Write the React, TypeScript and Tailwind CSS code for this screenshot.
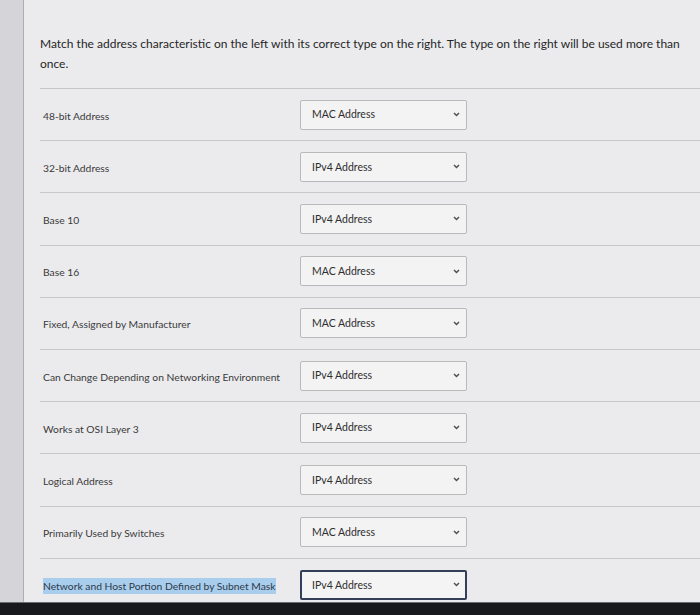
import React from 'react';

type Row = { label: string; value: string; highlight?: boolean };

const rows: Row[] = [
  { label: '48-bit Address', value: 'MAC Address' },
  { label: '32-bit Address', value: 'IPv4 Address' },
  { label: 'Base 10', value: 'IPv4 Address' },
  { label: 'Base 16', value: 'MAC Address' },
  { label: 'Fixed, Assigned by Manufacturer', value: 'MAC Address' },
  { label: 'Can Change Depending on Networking Environment', value: 'IPv4 Address' },
  { label: 'Works at OSI Layer 3', value: 'IPv4 Address' },
  { label: 'Logical Address', value: 'IPv4 Address' },
  { label: 'Primarily Used by Switches', value: 'MAC Address' },
  { label: 'Network and Host Portion Defined by Subnet Mask', value: 'IPv4 Address', highlight: true },
];

const Chevron: React.FC = () => (
  <svg width="7" height="5" viewBox="0 0 7 5" className="text-[#505050]">
    <path d="M1 1l2.5 2.5L6 1" fill="none" stroke="currentColor" strokeWidth="1.5" />
  </svg>
);

const App: React.FC = () => {
  return (
    <div className="w-[700px] h-[615px] flex flex-col bg-[#d6d6db] font-['Lato','Liberation_Sans',sans-serif] overflow-hidden">
      <div className="flex flex-1 min-h-0">
        {/* left window edge */}
        <div className="w-[24px] bg-[#d4d4d9] border-r border-[#aeaeb4]" />

        <div className="flex-1 flex flex-col bg-[#ebebee]">
          <div className="h-[4px] flex">
            <div className="w-[165px] bg-[#b4ba8a]" />
            <div className="flex-1 bg-[#d9d9dd]" />
          </div>

          <p className="w-[662px] pl-[16px] pt-[34px] text-[12px] leading-[20px] text-[#262626]">
            Match the address characteristic on the left with its correct type on the right. The type on the right will be used more than once.
          </p>

          <div className="mt-[14px] ml-[16px] flex flex-col border-t border-[#c5c5c8]">
            {rows.map((r, i) => (
              <div
                key={i}
                className="h-[52.2px] flex items-center border-b border-[#c8c8cb] last:border-b-0"
              >
                <div className="w-[260px] pl-[3px] pr-[8px] -mt-[2px]">
                  <span
                    className={
                      r.highlight
                        ? 'text-[10.3px] text-[#2d3a4a] bg-[#a9cdec] py-[2px]'
                        : 'text-[10.3px] text-[#3a3a3a]'
                    }
                  >
                    {r.label}
                  </span>
                </div>
                <div
                  className={
                    r.highlight
                      ? 'w-[167px] h-[30px] flex items-center justify-between pl-[10px] pr-[5px] bg-[#f4f4f5] border-2 border-[#34405a] rounded-[2px]'
                      : 'w-[167px] h-[30px] flex items-center justify-between pl-[11px] pr-[6px] bg-[#f3f3f4] border border-[#b9b9bc] rounded-[2px]'
                  }
                >
                  <span className="text-[10.5px] leading-none text-[#2e2e2e]">{r.value}</span>
                  <Chevron />
                </div>
              </div>
            ))}
          </div>
        </div>
      </div>

      <div className="h-[13px] bg-[#17191d] border-t border-[#6b6d72]" />
    </div>
  );
};

export default App;
